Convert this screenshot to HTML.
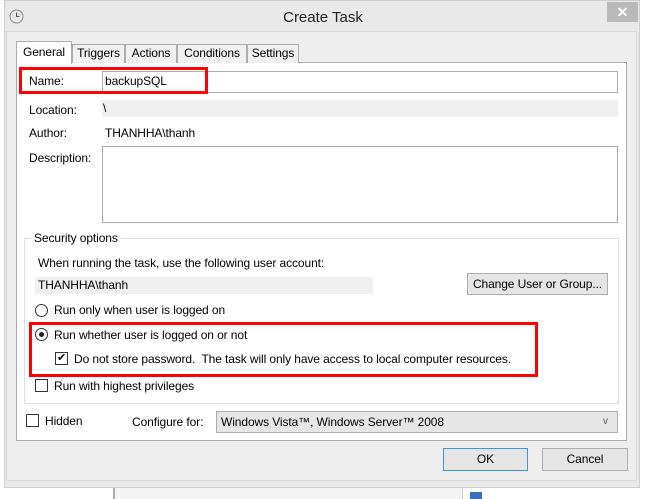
<!DOCTYPE html>
<html><head><meta charset="utf-8"><style>
*{margin:0;padding:0;box-sizing:border-box}
body{width:646px;height:499px;background:#fff;position:relative;overflow:hidden;font-family:"Liberation Sans",sans-serif;font-size:12px;letter-spacing:-0.1px;color:#000}
.a{position:absolute}
.t{position:absolute;white-space:nowrap;line-height:14px}
.box{position:absolute;background:#fff;border:1px solid #abadb3}
.btn{position:absolute;background:#e5e5e5;border:1px solid #adadad;text-align:center;line-height:20px}
.cb{position:absolute;width:13px;height:13px;border:1px solid #333;background:#fff}
.rb{position:absolute;width:13px;height:13px;border:1px solid #333;border-radius:50%;background:#fff}
.tab{position:absolute;top:44px;height:19px;background:#f0f0f0;border:1px solid #acacac;border-bottom:none;text-align:center;line-height:17px}
.red{position:absolute;border:3px solid #f00}
</style></head><body>
<div class="a" style="left:0;top:0;width:646px;height:8px;background:#fff"></div>
<div class="a" style="left:4px;top:0;width:636px;height:488px;background:#e9e9e9;border:1px solid #cfcfcf"></div>
<svg class="a" style="left:9px;top:9px" width="15" height="15" viewBox="0 0 15 15"><circle cx="7.5" cy="7.5" r="6.5" fill="#e8e8e8" stroke="#888"/><path d="M7.5 3.5V7.5H10.5" stroke="#555" fill="none"/></svg>
<div class="t" style="left:0;width:646px;top:9px;text-align:center;font-size:15px;line-height:17px;color:#222;letter-spacing:0">Create Task</div>
<div class="a" style="left:607px;top:2px;width:31px;height:20px;background:#b9b9b9;color:#fff;text-align:center;font-size:14px;line-height:20px;font-weight:bold">✕</div>
<div class="a" style="left:6px;top:31px;width:631px;height:450px;background:#eeeeee;border:1px solid #d9d9d9"></div>
<div class="a" style="left:16px;top:62px;width:611px;height:379px;background:#fff;border:1px solid #acacac"></div>
<div class="tab" style="left:72px;width:53px">Triggers</div>
<div class="tab" style="left:125px;width:52px">Actions</div>
<div class="tab" style="left:177px;width:70px">Conditions</div>
<div class="tab" style="left:247px;width:52px">Settings</div>
<div class="tab" style="left:16px;top:41px;width:56px;height:23px;background:#fff;line-height:20px">General</div>
<div class="box" style="left:102px;top:71px;width:516px;height:22px"></div>
<div class="t" style="left:29px;top:74px">Name:</div>
<div class="t" style="left:105px;top:74px">backupSQL</div>
<div class="red" style="left:19px;top:67px;width:189px;height:27px"></div>
<div class="a" style="left:102px;top:100px;width:516px;height:17px;background:#f0f0f0"></div>
<div class="t" style="left:29px;top:103px">Location:</div>
<div class="t" style="left:103px;top:101px">\</div>
<div class="t" style="left:29px;top:126px">Author:</div>
<div class="t" style="left:105px;top:126px">THANHHA\thanh</div>
<div class="t" style="left:29px;top:151px">Description:</div>
<div class="box" style="left:102px;top:146px;width:516px;height:77px"></div>
<div class="a" style="left:24px;top:238px;width:595px;height:166px;border:1px solid #dcdcdc"></div>
<div class="t" style="left:31px;top:231px;background:#fff;padding:0 3px">Security options</div>
<div class="t" style="left:38px;top:256px">When running the task, use the following user account:</div>
<div class="a" style="left:35px;top:277px;width:338px;height:17px;background:#f0f0f0"></div>
<div class="t" style="left:38px;top:278px">THANHHA\thanh</div>
<div class="btn" style="left:467px;top:273px;width:141px;height:22px">Change User or Group...</div>
<div class="rb" style="left:35px;top:304px"></div>
<div class="t" style="left:54px;top:303px">Run only when user is logged on</div>
<div class="rb" style="left:35px;top:328px"></div>
<div class="a" style="left:39px;top:332px;width:5px;height:5px;border-radius:50%;background:#222"></div>
<div class="t" style="left:54px;top:328px">Run whether user is logged on or not</div>
<div class="cb" style="left:55px;top:352px;font-size:11px;line-height:11px;text-align:center">✔</div>
<div class="t" style="left:74px;top:352px">Do not store password.&nbsp; The task will only have access to local computer resources.</div>
<div class="red" style="left:29px;top:322px;width:509px;height:55px"></div>
<div class="cb" style="left:35px;top:379px"></div>
<div class="t" style="left:54px;top:379px">Run with highest privileges</div>
<div class="cb" style="left:26px;top:414px"></div>
<div class="t" style="left:45px;top:414px">Hidden</div>
<div class="t" style="left:132px;top:415px">Configure for:</div>
<div class="a" style="left:216px;top:411px;width:402px;height:22px;background:#e6e6e6;border:1px solid #acacac"></div>
<div class="t" style="left:221px;top:415px">Windows Vista™, Windows Server™ 2008</div>
<div class="t" style="left:603px;top:415px;color:#555;font-size:10px">v</div>
<div class="btn" style="left:443px;top:448px;width:85px;height:23px;border-color:#3c96e6">OK</div>
<div class="btn" style="left:542px;top:448px;width:86px;height:23px">Cancel</div>
<div class="a" style="left:0;top:488px;width:646px;height:11px;background:#fff"></div>
<div class="a" style="left:113px;top:488px;width:350px;height:11px;border-left:2px solid #aaa;border-right:1px solid #ccc;background:#f4f4f4"></div>
<div class="a" style="left:470px;top:492px;width:12px;height:7px;background:#3a6ec0"></div>
</body></html>
